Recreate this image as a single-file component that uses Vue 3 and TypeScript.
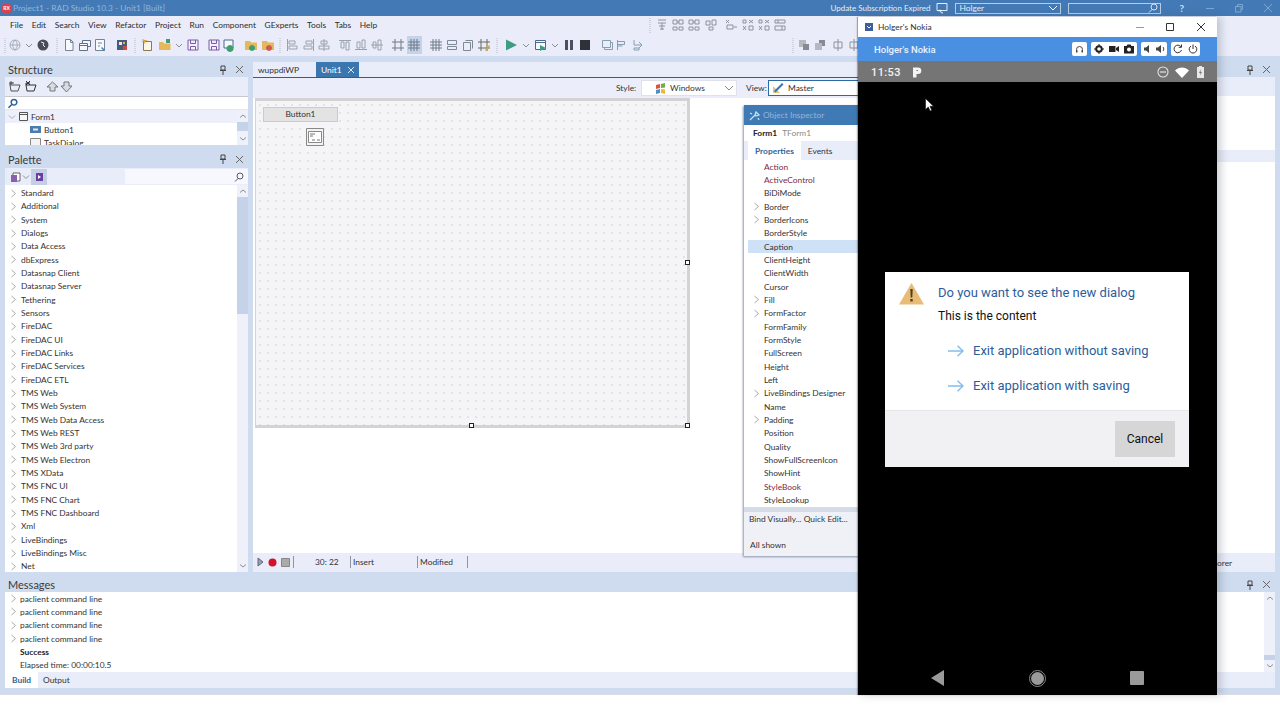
<script setup lang="ts">
type Shape = { d: string; f?: string; s?: string }
type Placed = { x: number; k: string }

const icons: Record<string, Shape[]> = {
  globe: [{ d: 'M8 3a5 5 0 1 0 0 10A5 5 0 0 0 8 3zM3 8h10M8 3c-3 3-3 7 0 10M8 3c3 3 3 7 0 10', s: '#a3adba' }],
  chev: [{ d: 'M5 7l3 3 3-3', s: '#8a8f98' }],
  earth: [{ d: 'M8 2.5a5.5 5.5 0 1 0 0 11 5.5 5.5 0 0 0 0-11z', f: '#4a4d55' }, { d: 'M6 5l3 1-1 2 2 2', s: '#e8ecf8' }],
  doc: [{ d: 'M4.5 2.5h5l2.500 2.500v8.500h-7.500zM9.500 2.500v3h2.500', s: '#75849a', f: '#f8f9fd' }],
  wins: [{ d: 'M5.500 3.500h8v6h-8z', s: '#5f7290', f: '#f8f9fd' }, { d: 'M2.500 6.500h8v7h-8zM2.500 8.500h8', s: '#5f7290', f: '#f8f9fd' }],
  form: [{ d: 'M3.500 2.500h9v11h-9zM6 6h4M6 9h2', s: '#75849a', f: '#f8f9fd' }, { d: 'M10 10l3 3-1 1-3-3z', f: '#3d7fb5' }],
  proj: [{ d: 'M3 3h10v10H3z', f: '#4a5a78' }, { d: 'M5 5h3v3H5z', f: '#e8e8f0' }, { d: 'M9 9h4v4H9z', f: '#cc4b3c' }, { d: 'M9 5h2v2H9z', f: '#e3b23c' }],
  newf: [{ d: 'M4.500 4.500h8v9h-8z', s: '#8a7a50', f: '#fbf6e6' }, { d: 'M3 2l1 2-2 1 3 0 1 2 1-3 2-1-3 0z', f: '#e0a030' }],
  open: [{ d: 'M2 5h4l1 1.500h6.500V13H2z', f: '#e5b85c' }, { d: 'M9 2h4v4H9z', f: '#3e9e6e' }],
  save: [{ d: 'M3 3h10v10H3zM5.500 3v3.500h5V3M5.500 13V9.500h5V13', s: '#7a5bab', f: '#f4f1fb' }],
  saveg: [{ d: 'M3 3h9v8H3z', s: '#4b6a8c', f: '#f4f8fb' }, { d: 'M9 8a3.500 3.500 0 1 0 .01 0z', f: '#3e9e6e' }],
  foldp: [{ d: 'M2 4h5l1 1.500h6V13H2z', f: '#e5b85c' }, { d: 'M9 8a3 3 0 1 0 .01 0z', f: '#3e9e6e' }],
  foldx: [{ d: 'M2 4h5l1 1.500h6V13H2z', f: '#e5b85c' }, { d: 'M9 8a3 3 0 1 0 .01 0z', f: '#d05a4a' }],
  al1: [{ d: 'M3.500 2v12M5 4h6v3H5zM5 9h8v3H5z', s: '#98a1ad' }],
  al2: [{ d: 'M12.500 2v12M5 4h6v3H5zM3 9h8v3H3z', s: '#98a1ad' }],
  al3: [{ d: 'M8 2v12M5 4h6v3H5zM3 9h10v3H3z', s: '#98a1ad' }],
  al4: [{ d: 'M2 3.500h12M4 5h3v6H4zM9 5h3v8H9z', s: '#98a1ad' }],
  al5: [{ d: 'M2 12.500h12M4 5h3v6H4zM9 3h3v8H9z', s: '#98a1ad' }],
  al6: [{ d: 'M2 8h12M4 5h3v6H4zM9 3h3v10H9z', s: '#98a1ad' }],
  grid: [{ d: 'M5 2v12M11 2v12M2 5h12M2 11h12', s: '#6f7a88' }],
  gridA: [{ d: 'M5 2v12M8 2v12M11 2v12M2 5h12M2 8h12M2 11h12', s: '#6f7a88' }],
  sz2: [{ d: 'M3.500 3.500h9v4h-9zM3.500 9.500h9v3h-9z', s: '#808a96' }],
  sz3: [{ d: 'M3.500 5.500h7v8h-7zM5.500 3.500h7v8', s: '#808a96' }],
  gridE: [{ d: 'M5 2v12M11 2v12M2 5h12M2 11h12', s: '#6a6a5a' }, { d: 'M9 13l4-5 1 1-4 5z', f: '#d9a83a' }],
  play: [{ d: 'M3 2.500L14 8 3 13.500z', f: '#3e9c82' }],
  runw: [{ d: 'M2.500 3.500h10v9h-10zM2.500 5.500h10', s: '#4b6a8c', f: '#f4f8fb' }, { d: 'M7 8l6 3-6 3z', f: '#3e9c82' }],
  pause: [{ d: 'M4 3h3v10H4zM9 3h3v10H9z', f: '#4b5160' }],
  stop: [{ d: 'M3 3h10v10H3z', f: '#2f3138' }],
  st1: [{ d: 'M3.500 3.500h8v7h-8zM5.500 10.500v2h8v-7h-2', s: '#84a0b0' }],
  st2: [{ d: 'M3.500 3v10M3.500 4.500h7v3h-7M3.500 9h5', s: '#84a0b0' }],
  st3: [{ d: 'M4 3v5h8M9 5l3 3-3 3M4 11h5v2H4z', s: '#84a0b0' }],
  dots1: [{ d: 'M4 3h8M4 6h8M8 6v7M5 9h6M6 12h4', s: '#8c929d' }],
  dots2: [{ d: 'M3 3h4v4H3zM9 3h4v4H9zM3 10h4v3H3zM9 10h4v3H9zM7 5h2', s: '#8c929d' }],
  dots4: [{ d: 'M3 4h4v4H3zM9 3h4v5H9zM6 10h4v3H6z', s: '#8c929d' }],
  dots5: [{ d: 'M3 3l3 3M3 6l3-3M4 8h6v4H4zM11 10h3', s: '#8c929d' }],
  dots6: [{ d: 'M3 3h3v3H3zM9 3l4 3M9 6l4-3M3 9l3 4M3 13l3-4M9 9h4v4H9z', s: '#8c929d' }],
  dots7: [{ d: 'M3 3h10v3H3zM3 9h10v4H3zM6 3v3M10 9v4', s: '#8c929d' }],
  stack1: [{ d: 'M3 3h7v7H3z', f: '#b5b9bf' }, { d: 'M7 7h6v6H7z', f: '#858b94' }],
  stack2: [{ d: 'M7 3h6v6H7z', f: '#858b94' }, { d: 'M3 6h7v7H3z', f: '#b5b9bf' }],
  mid: [{ d: 'M8 2v12M4 5h8v6H4z', s: '#8c929d' }],
  sep: [{ d: 'M8 1v1M8 3v1M8 5v1M8 7v1M8 9v1M8 11v1M8 13v1M8 15v1', s: '#b4b9c6' }],
}

function placed(list: Placed[], start: number) {
  let prev = start
  return list.map((it) => {
    const margin = it.x - 8 - prev
    prev = it.x + 8
    return { k: it.k, margin }
  })
}

const mainTools = placed([
  { x: 5, k: 'sep' }, { x: 15, k: 'globe' }, { x: 29, k: 'chev' }, { x: 43, k: 'earth' }, { x: 57, k: 'sep' },
  { x: 69, k: 'doc' }, { x: 85, k: 'wins' }, { x: 100, k: 'form' }, { x: 122, k: 'proj' }, { x: 135, k: 'sep' },
  { x: 147, k: 'newf' }, { x: 165, k: 'open' }, { x: 179, k: 'chev' }, { x: 193, k: 'save' }, { x: 214, k: 'save' },
  { x: 229, k: 'saveg' }, { x: 251, k: 'foldp' }, { x: 268, k: 'foldx' }, { x: 280, k: 'sep' }, { x: 292, k: 'al1' },
  { x: 309, k: 'al2' }, { x: 324, k: 'al3' }, { x: 345, k: 'al4' }, { x: 361, k: 'al5' }, { x: 377, k: 'al6' },
  { x: 398, k: 'grid' }, { x: 414, k: 'gridA' }, { x: 436, k: 'gridA' }, { x: 452, k: 'sz2' }, { x: 468, k: 'sz3' },
  { x: 484, k: 'gridE' }, { x: 497, k: 'sep' }, { x: 511, k: 'play' }, { x: 526, k: 'chev' }, { x: 541, k: 'runw' },
  { x: 555, k: 'chev' }, { x: 569, k: 'pause' }, { x: 585, k: 'stop' }, { x: 607, k: 'st1' }, { x: 622, k: 'st2' },
  { x: 638, k: 'st3' }, { x: 793, k: 'sep' }, { x: 804, k: 'stack1' }, { x: 820, k: 'stack2' }, { x: 838, k: 'mid' },
  { x: 854, k: 'mid' },
], 0)

const menuTools = placed([
  { x: 650, k: 'sep' }, { x: 662, k: 'dots1' }, { x: 678, k: 'dots2' }, { x: 694, k: 'dots2' }, { x: 711, k: 'dots4' },
  { x: 731, k: 'dots5' }, { x: 748, k: 'dots6' }, { x: 764, k: 'dots6' }, { x: 780, k: 'dots7' },
], 640)

const menus = ['File', 'Edit', 'Search', 'View', 'Refactor', 'Project', 'Run', 'Component', 'GExperts', 'Tools', 'Tabs', 'Help']

const palette = [
  'Standard', 'Additional', 'System', 'Dialogs', 'Data Access', 'dbExpress', 'Datasnap Client', 'Datasnap Server',
  'Tethering', 'Sensors', 'FireDAC', 'FireDAC UI', 'FireDAC Links', 'FireDAC Services', 'FireDAC ETL', 'TMS Web',
  'TMS Web System', 'TMS Web Data Access', 'TMS Web REST', 'TMS Web 3rd party', 'TMS Web Electron', 'TMS XData',
  'TMS FNC UI', 'TMS FNC Chart', 'TMS FNC Dashboard', 'Xml', 'LiveBindings', 'LiveBindings Misc', 'Net',
]

const props = [
  { n: 'Action', red: true },
  { n: 'ActiveControl', red: true },
  { n: 'BiDiMode' },
  { n: 'Border', exp: true },
  { n: 'BorderIcons', exp: true },
  { n: 'BorderStyle' },
  { n: 'Caption', sel: true },
  { n: 'ClientHeight' },
  { n: 'ClientWidth' },
  { n: 'Cursor' },
  { n: 'Fill', exp: true },
  { n: 'FormFactor', exp: true },
  { n: 'FormFamily' },
  { n: 'FormStyle' },
  { n: 'FullScreen' },
  { n: 'Height' },
  { n: 'Left' },
  { n: 'LiveBindings Designer', exp: true },
  { n: 'Name' },
  { n: 'Padding', exp: true },
  { n: 'Position' },
  { n: 'Quality' },
  { n: 'ShowFullScreenIcon' },
  { n: 'ShowHint' },
  { n: 'StyleBook', red: true },
  { n: 'StyleLookup' },
]

const messages = ['paclient command line', 'paclient command line', 'paclient command line', 'paclient command line']
const actions = ['Exit application without saving', 'Exit application with saving']
</script>

<template>
  <div class="app">
    <div class="ide">
      <header class="titlebar">
        <span class="rx">RX</span>
        <span class="title">Project1 - RAD Studio 10.3 - Unit1 [Built]</span>
        <span class="update">Update Subscription Expired</span>
        <svg class="upd-ico" width="12" height="12" viewBox="0 0 12 12">
          <path d="M1 1.500h10v7H1z" fill="none" stroke="#e6eef8" />
          <path d="M7 11c-2 0-3-1-3-3M4 8l-1.500 1M4 8l1.500 1" fill="none" stroke="#fff" />
        </svg>
        <div class="tcombo">
          <span>Holger</span>
          <svg width="10" height="8" viewBox="0 0 10 8"><path d="M1 2l4 4 4-4" fill="none" stroke="#fff" /></svg>
        </div>
        <div class="tsearch">
          <svg width="10" height="10" viewBox="0 0 10 10"><path d="M6 1a3 3 0 1 0 0 6 3 3 0 0 0 0-6zM4 6.500L1 9.500" fill="none" stroke="#d8e4f2" /></svg>
        </div>
        <span class="help">?</span>
        <svg class="wbtn first" width="10" height="10" viewBox="0 0 10 10"><path d="M1 5.500h8" stroke="#7ea6d2" /></svg>
        <svg class="wbtn" width="10" height="10" viewBox="0 0 10 10"><path d="M1.500 3.500h5.500v5.500H1.500zM3.500 3V1.500h5v5H7" fill="none" stroke="#7ea6d2" /></svg>
        <svg class="wbtn" width="10" height="10" viewBox="0 0 10 10"><path d="M1 1l8 8M9 1l-8 8" stroke="#7ea6d2" /></svg>
      </header>

      <div class="menubar">
        <nav class="menu">
          <span v-for="m in menus" :key="m">{{ m }}</span>
        </nav>
        <div class="tools">
          <svg v-for="(t, i) in menuTools" :key="i" width="16" height="16" viewBox="0 0 16 16" :style="{ marginLeft: t.margin + 'px' }">
            <path v-for="(p, j) in icons[t.k]" :key="j" :d="p.d" :fill="p.f || 'none'" :stroke="p.s || 'none'" />
          </svg>
        </div>
      </div>
      <div class="toolbar">
        <span class="tool-active"></span>
        <svg v-for="(t, i) in mainTools" :key="i" width="16" height="16" viewBox="0 0 16 16" :style="{ marginLeft: t.margin + 'px' }">
          <path v-for="(p, j) in icons[t.k]" :key="j" :d="p.d" :fill="p.f || 'none'" :stroke="p.s || 'none'" />
        </svg>
      </div>

      <main class="work">
        <aside class="left">
          <div class="ptitle">
            <span>Structure</span>
            <svg class="pin" width="8" height="10" viewBox="0 0 8 10"><path d="M2 1h4v4H2zM1 5.500h6M4 6v4" fill="none" stroke="#444" /></svg>
            <svg class="xx" width="9" height="9" viewBox="0 0 9 9"><path d="M1 1l7 7M8 1L1 8" stroke="#666" /></svg>
          </div>
          <div class="st-tools">
            <svg width="15" height="14" viewBox="0 0 15 14"><path d="M2 5h10l-2 6H3zM2 5V3h4M3 1v4M1 3h4" fill="none" stroke="#555" /></svg>
            <svg width="15" height="14" viewBox="0 0 15 14"><path d="M2 5h10l-2 6H3zM2 5V3h4M2 1l4 4M6 1L2 5" fill="none" stroke="#333" /></svg>
            <svg class="gap" width="13" height="14" viewBox="0 0 13 14"><path d="M6.500 2L12 7H9v4H4V7H1z" fill="#d7dbe4" stroke="#777" /></svg>
            <svg width="13" height="14" viewBox="0 0 13 14"><path d="M4 2h5v4h3l-5.500 6L1 6h3z" fill="#d7dbe4" stroke="#777" /></svg>
          </div>
          <div class="st-search">
            <svg width="11" height="11" viewBox="0 0 11 11"><path d="M7 1.500a2.800 2.800 0 1 0 0 5.600 2.800 2.800 0 0 0 0-5.600zM4.800 6.500L1.500 9.800" fill="none" stroke="#2c5f96" stroke-width="1.500" /></svg>
          </div>
          <div class="st-tree">
            <div class="tree-body">
              <div class="tree-row sel">
                <svg class="chev" width="8" height="8" viewBox="0 0 8 8"><path d="M1 2.500l3 3 3-3" fill="none" stroke="#aaa" /></svg>
                <svg width="11" height="11" viewBox="0 0 11 11"><path d="M1.500 1.500h8v8h-8z" fill="#f6f6f6" stroke="#555" /><path d="M1.500 3.500h8" stroke="#555" /></svg>
                <span>Form1</span>
              </div>
              <div class="tree-row sub">
                <svg width="11" height="7" viewBox="0 0 11 7"><path d="M0 0h11v7H0z" fill="#4d7ab0" /><path d="M3 2.500h5v2H3z" fill="#dfe8f4" /></svg>
                <span>Button1</span>
              </div>
              <div class="tree-row sub">
                <svg width="11" height="11" viewBox="0 0 11 11"><path d="M.5.500h10v10H.5z" fill="#f4f4f4" stroke="#888" /></svg>
                <span>TaskDialog</span>
              </div>
            </div>
            <div class="sbar">
              <svg width="8" height="6" viewBox="0 0 8 6"><path d="M1 4.500L4 2l3 2.500" fill="none" stroke="#8a8f98" /></svg>
              <i class="thumb tiny"></i>
              <svg class="down" width="8" height="6" viewBox="0 0 8 6"><path d="M1 1.500L4 4l3-2.500" fill="none" stroke="#8a8f98" /></svg>
            </div>
          </div>

          <div class="ptitle second">
            <span>Palette</span>
            <svg class="pin" width="8" height="10" viewBox="0 0 8 10"><path d="M2 1h4v4H2zM1 5.500h6M4 6v4" fill="none" stroke="#444" /></svg>
            <svg class="xx" width="9" height="9" viewBox="0 0 9 9"><path d="M1 1l7 7M8 1L1 8" stroke="#666" /></svg>
          </div>
          <div class="pal-tools">
            <svg width="12" height="13" viewBox="0 0 12 13"><path d="M3 3h7v8H3z" fill="#fff" stroke="#666" /><path d="M1 5h6v7H1z" fill="#8a5fb0" /></svg>
            <svg width="8" height="8" viewBox="0 0 8 8"><path d="M1 2.500l3 3 3-3" fill="none" stroke="#8a8f98" /></svg>
            <span class="pal-btn"><svg width="9" height="10" viewBox="0 0 9 10"><path d="M1 1h7v8H1z" fill="#6b3fa0" /><path d="M3 3l3 2-3 2z" fill="#fff" /></svg></span>
            <div class="pal-search">
              <svg width="10" height="10" viewBox="0 0 10 10"><path d="M6 1a3 3 0 1 0 0 6 3 3 0 0 0 0-6zM4 6.500L1 9.500" fill="none" stroke="#556" /></svg>
            </div>
          </div>
          <div class="pal-list">
            <div class="pal-body">
              <div v-for="p in palette" :key="p" class="row">
                <svg class="chev" width="7" height="9" viewBox="0 0 7 9"><path d="M1.500 1l4 3.500-4 3.500" fill="none" stroke="#aaa" /></svg>
                <span>{{ p }}</span>
              </div>
            </div>
            <div class="sbar">
              <svg width="8" height="6" viewBox="0 0 8 6"><path d="M1 4.500L4 2l3 2.500" fill="none" stroke="#8a8f98" /></svg>
              <i class="thumb"></i>
              <svg class="down" width="8" height="6" viewBox="0 0 8 6"><path d="M1 1.500L4 4l3-2.500" fill="none" stroke="#8a8f98" /></svg>
            </div>
          </div>
        </aside>

        <section class="center">
          <div class="tabs">
            <span class="tab">wuppdiWP</span>
            <span class="tab active">
              Unit1
              <svg width="8" height="8" viewBox="0 0 8 8"><path d="M1 1l6 6M7 1L1 7" stroke="#dfe9f5" /></svg>
            </span>
          </div>
          <div class="viewbar">
            <span class="lbl">Style:</span>
            <div class="vcombo style">
              <svg width="11" height="11" viewBox="0 0 11 11">
                <path d="M1 2l4-1v4l-4 1z" fill="#d9583b" /><path d="M6 1l4-1v4.500L6 5z" fill="#6faf45" />
                <path d="M1 7l4-1v4l-4 1z" fill="#4a8fd0" /><path d="M6 6l4 .500V11l-4-1z" fill="#e8b93c" />
              </svg>
              <span>Windows</span>
              <svg class="dn" width="10" height="8" viewBox="0 0 10 8"><path d="M1 2l4 4 4-4" fill="none" stroke="#888" /></svg>
            </div>
            <span class="lbl view">View:</span>
            <div class="vcombo master">
              <svg width="12" height="12" viewBox="0 0 12 12">
                <path d="M1 11V4l7 7z" fill="#e8c27a" /><path d="M2 9l8-8 1.500 1.500-8 8z" fill="#3a76b0" />
              </svg>
              <span>Master</span>
            </div>
          </div>
          <div class="editor">
            <div class="form">
              <div class="fbtn">Button1</div>
              <svg class="ficon" width="18" height="18" viewBox="0 0 18 18">
                <path d="M.5.500h17v17H.5z" fill="#f3f3f3" stroke="#888" />
                <path d="M2.500 3.500h13v11h-13z" fill="#fff" stroke="#888" />
                <path d="M4 6h5M4 8h3M11 12h3M6 12h3" stroke="#777" />
              </svg>
            </div>
            <i class="handle h-r"></i>
            <i class="handle h-b"></i>
            <i class="handle h-c"></i>
          </div>
          <div class="status">
            <svg width="9" height="10" viewBox="0 0 9 10"><path d="M2 1l5 4-5 4z" fill="#8fa0b8" stroke="#667" /></svg>
            <svg class="rec" width="9" height="9" viewBox="0 0 9 9"><circle cx="4.500" cy="4.500" r="4" fill="#d5102a" /></svg>
            <svg class="sq" width="9" height="9" viewBox="0 0 9 9"><path d="M.5.500h8v8h-8z" fill="#aaa" stroke="#888" /></svg>
            <i class="bar b0"></i>
            <span class="pos">30: 22</span>
            <i class="bar"></i>
            <span class="ins">Insert</span>
            <i class="bar"></i>
            <span class="mod">Modified</span>
            <i class="bar"></i>
          </div>
        </section>

        <aside class="right">
          <div class="rtitle">
            <svg class="pin" width="8" height="10" viewBox="0 0 8 10"><path d="M2 1h4v4H2zM1 5.500h6M4 6v4" fill="none" stroke="#444" /></svg>
            <svg class="xx" width="9" height="9" viewBox="0 0 9 9"><path d="M1 1l7 7M8 1L1 8" stroke="#666" /></svg>
          </div>
          <div class="rband one"></div>
          <div class="rwhite short"></div>
          <div class="rband two"></div>
          <div class="rwhite long"></div>
          <div class="rband foot">orer</div>
        </aside>
      </main>

      <section class="messages">
        <div class="mtitle">
          <span>Messages</span>
          <svg class="pin" width="8" height="10" viewBox="0 0 8 10"><path d="M2 1h4v4H2zM1 5.500h6M4 6v4" fill="none" stroke="#444" /></svg>
          <svg class="xx" width="9" height="9" viewBox="0 0 9 9"><path d="M1 1l7 7M8 1L1 8" stroke="#666" /></svg>
        </div>
        <div class="mbody">
          <div class="mlist">
            <div v-for="(m, i) in messages" :key="i" class="row msg">
              <svg class="chev" width="7" height="9" viewBox="0 0 7 9"><path d="M1.500 1l4 3.500-4 3.500" fill="none" stroke="#aaa" /></svg>
              <span>{{ m }}</span>
            </div>
            <div class="row msg plain"><b>Success</b></div>
            <div class="row msg plain">Elapsed time: 00:00:10.5</div>
          </div>
          <div class="msbar">
            <svg width="8" height="6" viewBox="0 0 8 6"><path d="M1 4.500L4 2l3 2.500" fill="none" stroke="#8a8f98" /></svg>
            <i class="mthumb"></i>
            <svg width="8" height="6" viewBox="0 0 8 6"><path d="M1 1.500L4 4l3-2.500" fill="none" stroke="#8a8f98" /></svg>
          </div>
        </div>
        <div class="mtabs">
          <span class="mtab on">Build</span>
          <span class="mtab">Output</span>
        </div>
      </section>
    </div>

    <!-- floating object inspector -->
    <div class="inspector">
      <div class="oi-title">
        <svg width="11" height="11" viewBox="0 0 11 11"><path d="M1 10l5-5M6 5l1-3 3 3-3 1zM1 3l2 1M9 8l1 2" fill="none" stroke="#bfe3f0" stroke-width="1.300" /></svg>
        <span>Object Inspector</span>
      </div>
      <div class="oi-head"><b>Form1</b><span>TForm1</span></div>
      <div class="oi-tabs">
        <span class="oi-tab on">Properties</span>
        <span class="oi-tab">Events</span>
      </div>
      <div class="oi-list">
        <div v-for="p in props" :key="p.n" class="prop" :class="{ sel: p.sel, red: p.red }">
          <svg v-if="p.exp" class="pchev" width="7" height="9" viewBox="0 0 7 9"><path d="M1.500 1l4 3.500-4 3.500" fill="none" stroke="#aaa" /></svg>
          <span>{{ p.n }}</span>
        </div>
      </div>
      <div class="oi-grey"></div>
      <div class="oi-links">Bind Visually... Quick Edit...</div>
      <div class="oi-shown">All shown</div>
    </div>

    <!-- device window -->
    <div class="phone">
      <div class="ph-title">
        <svg width="10" height="10" viewBox="0 0 10 10"><path d="M1 1h8v8H1z" fill="#3d5f9c" /><path d="M3 4l2 2 2-2" fill="none" stroke="#fff" /></svg>
        <span>Holger's Nokia</span>
        <svg class="ph-min" width="10" height="10" viewBox="0 0 10 10"><path d="M1 5.500h8" stroke="#999" /></svg>
        <svg class="ph-max" width="10" height="10" viewBox="0 0 10 10"><path d="M1.500 1.500h7v7h-7z" fill="none" stroke="#333" /></svg>
        <svg class="ph-x" width="10" height="10" viewBox="0 0 10 10"><path d="M1 1l8 8M9 1L1 9" stroke="#333" /></svg>
      </div>
      <div class="ph-bar">
        <span class="ph-name">Holger's Nokia</span>
        <div class="grp g1">
          <svg width="9" height="9" viewBox="0 0 9 9"><path d="M1.500 6V4.500a3 3 0 0 1 6 0V6" fill="none" stroke="#444" /><path d="M1 5h1.500v2.500H1zM6.500 5H8v2.500H6.500z" fill="#444" /></svg>
        </div>
        <div class="grp g2">
          <svg width="10" height="10" viewBox="0 0 10 10"><circle cx="5" cy="5" r="2.800" fill="none" stroke="#222" stroke-width="2" /><path d="M5 0v2M5 8v2M0 5h2M8 5h2" stroke="#222" /></svg>
          <svg width="10" height="10" viewBox="0 0 10 10"><path d="M0 2h6.500v6H0zM7 4l3-2v6L7 6z" fill="#222" /></svg>
          <svg width="10" height="10" viewBox="0 0 10 10"><path d="M0 2h2.500l1-1.500h3L7.500 2H10v7.500H0z" fill="#222" /><circle cx="5" cy="5.500" r="2" fill="#fff" /></svg>
        </div>
        <div class="grp g3">
          <svg width="9" height="10" viewBox="0 0 9 10"><path d="M1 3.500h2L6 1v8L3 6.500H1z" fill="#444" /></svg>
          <svg width="11" height="10" viewBox="0 0 11 10"><path d="M1 3.500h2L6 1v8L3 6.500H1z" fill="#444" /><path d="M8 3c1 1 1 3 0 4" fill="none" stroke="#444" /></svg>
        </div>
        <div class="grp g4">
          <svg width="10" height="10" viewBox="0 0 10 10"><path d="M8.500 6A3.800 3.800 0 1 1 8 2.800M8.500 .5v2.800H5.700" fill="none" stroke="#333" /></svg>
          <svg width="10" height="10" viewBox="0 0 10 10"><path d="M5 .5v4.500M3 2a3.800 3.800 0 1 0 4 0" fill="none" stroke="#333" /></svg>
        </div>
      </div>
      <div class="ph-status">
        <span class="clock">11:53</span>
        <svg class="p" width="10" height="11" viewBox="0 0 10 11"><path d="M1 .5h5a3.300 3.300 0 0 1 0 6.600H4.500v3.400H1z" fill="#f4f4f4" /><path d="M4.500 3.500h1.500" stroke="#757575" /></svg>
        <svg class="dnd" width="12" height="12" viewBox="0 0 12 12"><circle cx="6" cy="6" r="5" fill="none" stroke="#e4e4e4" stroke-width="1.100" /><path d="M3 6h6" stroke="#e4e4e4" stroke-width="1.200" /></svg>
        <svg class="wifi" width="14" height="11" viewBox="0 0 14 11"><path d="M0 3.500C4-.5 10-.5 14 3.500L7 11z" fill="#fff" /></svg>
        <svg class="batt" width="7" height="12" viewBox="0 0 7 12"><path d="M2 0h3v1h2v11H0V1h2z" fill="#e8e8e8" /><path d="M4 3L2 7h1.500L3 9.500 5 6H3.500z" fill="#757575" /></svg>
      </div>
      <div class="screen">
        <div class="dialog">
          <div class="d-main">
            <div class="d-head">
              <svg width="25" height="22" viewBox="0 0 25 22">
                <path d="M12.500 0L25 21.500H0z" fill="#e9bb74" />
                <path d="M11.300 6h2.400l-.4 8.500h-1.600zM11.300 16h2.400v2.500h-2.400z" fill="#4a4030" />
              </svg>
              <div>
                <div class="d-q">Do you want to see the new dialog</div>
                <div class="d-c">This is the content</div>
              </div>
            </div>
            <div v-for="a in actions" :key="a" class="d-act">
              <svg width="16" height="12" viewBox="0 0 16 12"><path d="M0 6h15M9.500 .8L15 6l-5.500 5.200" fill="none" stroke="#84bdee" stroke-width="1.400" /></svg>
              <span>{{ a }}</span>
            </div>
          </div>
          <div class="d-foot">
            <div class="d-cancel">Cancel</div>
          </div>
        </div>
        <div class="nav">
          <svg width="13" height="16" viewBox="0 0 13 16"><path d="M13 0v16L0 8z" fill="#9a9a9a" /></svg>
          <svg width="17" height="17" viewBox="0 0 17 17"><circle cx="8.500" cy="8.500" r="8" fill="none" stroke="#8a8a8a" /><circle cx="8.500" cy="8.500" r="6.500" fill="#9a9a9a" /></svg>
          <svg width="14" height="14" viewBox="0 0 14 14"><rect width="14" height="14" rx="1" fill="#9a9a9a" /></svg>
        </div>
      </div>
    </div>

    <svg class="cursor" width="9" height="14" viewBox="0 0 9 14"><path d="M.5.500v11l2.800-2.500 1.800 4 1.700-.7-1.800-4H8.500z" fill="#fff" stroke="#111" stroke-width=".6" /></svg>
  </div>
</template>

<style scoped>
.app {
  position: relative;
  width: 1280px;
  height: 720px;
  overflow: hidden;
  background: #fff;
  font-family: Lato, "Open Sans", sans-serif;
  font-size: 8.4px;
  color: #333;
}
.ide {
  height: 695px;
  display: flex;
  flex-direction: column;
  background: #cfdcef;
  border-bottom: 1px solid #dcdde2;
  box-sizing: border-box;
}
.titlebar {
  height: 16px;
  flex: none;
  display: flex;
  align-items: center;
  padding-right: 7px;
  background: #437ab5;
  color: #e4edf7;
}
.rx {
  width: 11px;
  height: 11px;
  margin-left: 1px;
  border-radius: 50%;
  background: #d9414b;
  color: #fff;
  font-size: 5px;
  font-weight: 700;
  line-height: 11px;
  text-align: center;
}
.title {
  margin-left: 1px;
  color: #93b5da;
}
.update {
  margin-left: auto;
  font-size: 8px;
}
.upd-ico {
  margin-left: 6px;
}
.tcombo,
.tsearch {
  height: 11px;
  box-sizing: border-box;
  display: flex;
  align-items: center;
  justify-content: space-between;
  border: 1px solid #b5cde6;
  padding: 0 2px 0 3px;
}
.tcombo {
  width: 106px;
  margin-left: 7px;
}
.tsearch {
  width: 93px;
  margin-left: 7px;
  justify-content: flex-end;
}
.help {
  margin-left: 18px;
  font-size: 10px;
  font-weight: 700;
  color: #cfe0f2;
}
.wbtn {
  margin-left: 19px;
}
.wbtn.first {
  margin-left: 21px;
}
.menubar {
  height: 18px;
  flex: none;
  display: flex;
  align-items: center;
  background: #eaedf9;
}
.menu {
  width: 640px;
  flex: none;
  box-sizing: border-box;
  display: flex;
  gap: 8.600px;
  padding: 0 0 0 10px;
  color: #2c2c2c;
}
.tools,
.toolbar {
  display: flex;
  align-items: center;
}
.toolbar {
  position: relative;
  height: 22px;
  flex: none;
  background: #eaedf9;
}
.tool-active {
  position: absolute;
  left: 407px;
  top: 2px;
  width: 15px;
  height: 18px;
  background: #c4d3ea;
}
.toolbar svg {
  position: relative;
  flex: none;
}
.work {
  flex: 1;
  min-height: 0;
  display: flex;
  padding-top: 6px;
}
.left {
  width: 243px;
  flex: none;
  margin-left: 5px;
  display: flex;
  flex-direction: column;
}
.ptitle,
.mtitle {
  height: 15px;
  flex: none;
  display: flex;
  align-items: center;
  font-size: 11px;
  color: #3a3a3a;
  padding-left: 3px;
}
.ptitle .pin,
.mtitle .pin {
  margin-left: auto;
}
.xx {
  margin: 0 4px 0 8px;
}
.second {
  margin-top: 7px;
  height: 16px;
  box-sizing: border-box;
  padding-bottom: 2px;
}
.st-tools {
  height: 19px;
  flex: none;
  display: flex;
  align-items: center;
  gap: 1px;
  padding-left: 3px;
  background: #e9ecf9;
}
.st-tools .gap {
  margin-left: 6px;
}
.st-search {
  height: 14px;
  flex: none;
  display: flex;
  align-items: center;
  padding-left: 2px;
  background: #fff;
  border-top: 1px solid #c8c8d0;
  border-bottom: 1px solid #e4e6ee;
  box-sizing: border-box;
}
.st-tree {
  height: 35px;
  flex: none;
  display: flex;
  overflow: hidden;
  background: #fff;
}
.tree-body {
  flex: 1;
  overflow: hidden;
}
.tree-row {
  height: 13.33px;
  display: flex;
  align-items: center;
  gap: 2px;
  padding-left: 3px;
}
.tree-row.sel {
  background: #edf0fa;
}
.tree-row.sub {
  padding-left: 25px;
  gap: 3px;
}
.sbar {
  width: 11px;
  flex: none;
  display: flex;
  flex-direction: column;
  align-items: center;
  background: #eef0fa;
  padding-top: 3px;
  box-sizing: border-box;
}
.sbar .down {
  margin-top: auto;
  margin-bottom: 3px;
}
.thumb {
  width: 11px;
  height: 117px;
  margin-top: 3px;
  background: #c5d3e8;
}
.thumb.tiny {
  height: 9px;
}
.pal-tools {
  height: 17px;
  flex: none;
  display: flex;
  align-items: center;
  padding-left: 5px;
  background: #e9ecf9;
}
.pal-btn {
  width: 16px;
  height: 16px;
  margin-left: 1px;
  display: flex;
  align-items: center;
  justify-content: center;
  background: #c4cfe6;
}
.pal-search {
  margin-left: auto;
  width: 123px;
  height: 15px;
  display: flex;
  align-items: center;
  justify-content: flex-end;
  padding-right: 4px;
  box-sizing: border-box;
  background: #f7f8fd;
}
.pal-list {
  flex: 1;
  min-height: 0;
  display: flex;
  background: #fff;
  overflow: hidden;
}
.pal-body {
  flex: 1;
  padding-top: 1.500px;
  overflow: hidden;
}
.row {
  height: 13.33px;
  display: flex;
  align-items: center;
  gap: 4px;
  padding-left: 5px;
  color: #333;
  white-space: nowrap;
}
.center {
  flex: 1;
  min-width: 0;
  margin-left: 5px;
  display: flex;
  flex-direction: column;
  background: #fff;
}
.tabs {
  height: 15px;
  flex: none;
  display: flex;
  padding-left: 1px;
  background: #e9ecf9;
  border-bottom: 1px solid #2b5f93;
}
.tab {
  display: flex;
  align-items: center;
  padding: 0 4px;
  width: 62px;
  box-sizing: border-box;
  color: #333;
}
.tab.active {
  width: 43px;
  justify-content: space-between;
  padding: 0 4px 0 5px;
  background: #3a76b0;
  color: #fff;
}
.viewbar {
  height: 20px;
  flex: none;
  display: flex;
  align-items: center;
  padding-left: 363px;
  background: #ebeefa;
  overflow: hidden;
}
.lbl {
  width: 25px;
  flex: none;
}
.vcombo {
  height: 16px;
  box-sizing: border-box;
  flex: none;
  display: flex;
  align-items: center;
  gap: 4px;
  background: #fff;
}
.style {
  width: 96px;
  padding-left: 13px;
  border: 1px solid #dfe2ec;
}
.style .dn {
  margin-left: auto;
  margin-right: 2px;
}
.lbl.view {
  width: 22px;
  margin-left: 9px;
}
.master {
  width: 130px;
  padding-left: 3px;
  border: 1px solid #2e6aa3;
}
.editor {
  position: relative;
  flex: 1;
  min-height: 0;
  background: #fff;
}
.form {
  position: absolute;
  left: 2px;
  top: 0;
  width: 435px;
  height: 330px;
  box-sizing: border-box;
  border: 3px solid #d3d3d6;
  border-left-width: 1px;
  background-color: #f5f5f7;
  background-image: radial-gradient(circle, #bcbcc4 .5px, transparent .8px);
  background-size: 8px 8px;
}
.fbtn {
  position: absolute;
  left: 7px;
  top: 6px;
  width: 75px;
  height: 15px;
  box-sizing: border-box;
  border: 1px solid #cbcbcb;
  background: #e3e3e4;
  text-align: center;
  line-height: 13px;
}
.ficon {
  position: absolute;
  left: 50px;
  top: 27px;
}
.handle {
  position: absolute;
  width: 5px;
  height: 5px;
  box-sizing: border-box;
  border: 1px solid #222;
  background: #fff;
}
.h-r {
  left: 432px;
  top: 162px;
}
.h-b {
  left: 216px;
  top: 325px;
}
.h-c {
  left: 432px;
  top: 325px;
}
.status {
  height: 19px;
  flex: none;
  box-sizing: border-box;
  display: flex;
  align-items: center;
  padding: 0 0 1px 3px;
  background: #eaedf9;
}
.rec {
  margin-left: 3px;
}
.sq {
  margin-left: 4px;
}
.bar {
  width: 1px;
  height: 12px;
  background: #8c95a5;
  flex: none;
}
.b0 {
  margin-left: 3px;
}
.pos {
  margin-left: 21px;
  width: 35px;
}
.ins,
.mod {
  padding-left: 2px;
  box-sizing: border-box;
}
.ins {
  width: 66px;
}
.mod {
  width: 49px;
}
.right {
  width: 63px;
  flex: none;
  display: flex;
  flex-direction: column;
  margin-right: 5px;
}
.rtitle {
  height: 15px;
  flex: none;
  display: flex;
  justify-content: flex-end;
  align-items: center;
}
.rband {
  background: #e9ecf9;
}
.one {
  height: 19px;
}
.two {
  height: 12px;
}
.rwhite {
  background: #fff;
}
.short {
  height: 54px;
}
.long {
  flex: 1;
}
.foot {
  height: 19px;
  display: flex;
  align-items: center;
  padding-left: 5px;
}
.messages {
  height: 117px;
  flex: none;
  margin: 5px 5px 0;
  display: flex;
  flex-direction: column;
}
.mbody {
  height: 80px;
  flex: none;
  display: flex;
  background: #fff;
}
.mlist {
  flex: 1;
}
.msg {
  gap: 3px;
  padding-left: 5px;
}
.plain {
  padding-left: 15px;
}
.plain b {
  font-weight: 700;
  color: #222;
}
.msbar {
  width: 11px;
  display: flex;
  flex-direction: column;
  align-items: center;
  justify-content: space-between;
  position: relative;
  padding: 3px 0;
  box-sizing: border-box;
  background: #eef0fa;
}
.mthumb {
  margin-top: auto;
  margin-bottom: 3px;
  width: 11px;
  height: 5px;
  background: #c5d3e8;
}
.mtabs {
  height: 16px;
  flex: none;
  display: flex;
  background: #e9ecf9;
}
.mtab {
  display: flex;
  align-items: center;
  padding: 0 5px;
  height: 100%;
}
.mtab.on {
  width: 33px;
  box-sizing: border-box;
  padding-left: 7px;
  background: #fff;
  color: #2f6499;
  font-weight: 700;
}
.inspector {
  position: absolute;
  left: 744px;
  top: 105px;
  width: 130px;
  height: 451px;
  display: flex;
  flex-direction: column;
  background: #f0f1f6;
  box-shadow: -1px 1px 2px #8a96a8;
}
.oi-title {
  height: 20px;
  flex: none;
  display: flex;
  align-items: center;
  gap: 3px;
  padding-left: 5px;
  background: #3f7ab5;
  color: #93b5da;
}
.oi-head {
  height: 16px;
  flex: none;
  display: flex;
  align-items: center;
  gap: 5px;
  padding-left: 9px;
  background: #fff;
}
.oi-head b {
  color: #222;
}
.oi-head span {
  color: #8a8a8a;
}
.oi-tabs {
  height: 19px;
  flex: none;
  display: flex;
  padding-left: 4px;
  background: #e9ecf9;
}
.oi-tab {
  display: flex;
  align-items: center;
  padding: 0 7px;
}
.oi-tab.on {
  background: #fff;
  color: #2f6499;
  font-weight: 700;
}
.oi-list {
  padding-left: 4px;
  background: #fff;
  height: 347px;
  flex: none;
}
.prop {
  position: relative;
  height: 13.33px;
  display: flex;
  align-items: center;
  padding-left: 16px;
  color: #333;
}
.prop.sel {
  background: #cfe1f6;
}
.prop.red {
  color: #7c2b3d;
}
.pchev {
  position: absolute;
  left: 5px;
}
.oi-grey {
  height: 5px;
  flex: none;
  background: #d6dbe8;
}
.oi-links {
  height: 14px;
  flex: none;
  padding-left: 5px;
  line-height: 14px;
}
.oi-shown {
  margin-top: 14px;
  padding-left: 6px;
}
.phone {
  position: absolute;
  left: 858px;
  top: 17px;
  width: 359px;
  height: 678px;
  display: flex;
  flex-direction: column;
  box-shadow: 4px 0 8px rgba(60, 70, 90, .25), -1px 0 1px rgba(0, 0, 0, .3);
}
.ph-title {
  height: 20px;
  flex: none;
  display: flex;
  align-items: center;
  padding-left: 6px;
  gap: 4px;
  background: #fff;
  color: #333;
}
.ph-min {
  margin-left: auto;
}
.ph-max {
  margin-left: 16px;
}
.ph-x {
  margin: 0 11px 0 17px;
}
.ph-bar {
  height: 24px;
  flex: none;
  display: flex;
  align-items: center;
  padding-left: 16px;
  background: #4a90e2;
}
.ph-name {
  font-family: Roboto, sans-serif;
  font-size: 9.500px;
  font-weight: 500;
  color: #e8f1fc;
}
.grp {
  height: 14px;
  display: flex;
  align-items: center;
  justify-content: space-around;
  margin-left: 4px;
  border-radius: 2px;
  background: #fff;
}
.g1 {
  width: 15px;
  margin-left: auto;
}
.g2 {
  width: 46px;
}
.g3 {
  width: 26px;
}
.g4 {
  width: 29px;
  margin-right: 17px;
}
.ph-status {
  height: 21px;
  flex: none;
  box-sizing: border-box;
  display: flex;
  align-items: center;
  padding: 1px 0 0 13px;
  background: #757575;
  color: #f2f2f2;
}
.clock {
  font-family: Roboto, sans-serif;
  font-size: 11px;
  font-weight: 500;
  letter-spacing: .4px;
}
.p {
  margin-left: 11px;
}
.dnd {
  margin-left: auto;
}
.wifi {
  margin-left: 6px;
}
.batt {
  margin: 0 13px 0 8px;
}
.screen {
  flex: 1;
  min-height: 0;
  display: flex;
  flex-direction: column;
  padding: 190px 0 0 27px;
  box-sizing: border-box;
  background: #000;
}
.dialog {
  width: 304px;
  height: 195px;
  flex: none;
  display: flex;
  flex-direction: column;
  font-family: Roboto, sans-serif;
  font-size: 12px;
  background: #fff;
}
.d-main {
  height: 139px;
  flex: none;
  box-sizing: border-box;
  padding: 11px 0 0 14px;
  border-bottom: 1px solid #e6e6e8;
}
.d-head {
  display: flex;
  gap: 14px;
}
.d-q {
  margin-top: 2px;
  height: 16px;
  line-height: 16px;
  font-size: 13px;
  color: #2c5d9c;
}
.d-c {
  margin-top: 7px;
  height: 16px;
  line-height: 16px;
  color: #111;
}
.d-act {
  height: 35px;
  display: flex;
  align-items: center;
  gap: 9px;
  padding-left: 49px;
  font-size: 13px;
  color: #2c5d9c;
}
.d-head + .d-act {
  margin-top: 9px;
}
.d-foot {
  flex: 1;
  display: flex;
  justify-content: flex-end;
  align-items: center;
  padding-right: 14px;
  background: #f1f1f3;
}
.d-cancel {
  width: 60px;
  height: 36px;
  display: flex;
  align-items: center;
  justify-content: center;
  background: #d6d6d6;
  color: #111;
}
.nav {
  margin-top: auto;
  margin-left: -27px;
  height: 34px;
  flex: none;
  display: flex;
  align-items: center;
  gap: 84.500px;
  padding-left: 73px;
}
.cursor {
  position: absolute;
  left: 925px;
  top: 98px;
}
</style>

<style>
html,
body {
  margin: 0;
  background: #fff;
}
</style>
